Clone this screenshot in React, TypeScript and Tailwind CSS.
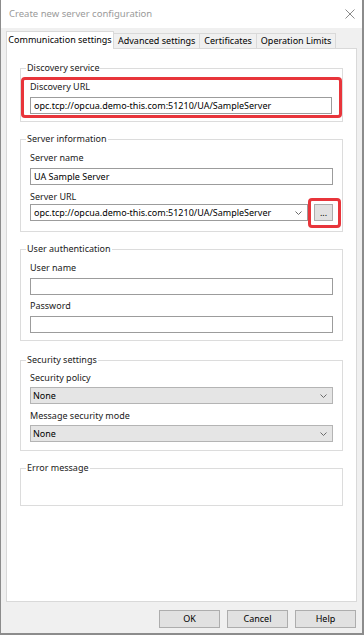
import { ReactNode } from "react";

const font = "font-['Noto_Sans','DejaVu_Sans',sans-serif]";

function Chevron({ className }: { className?: string }) {
  return (
    <svg width="7" height="4" viewBox="0 0 7 4" className={className}>
      <path d="M0.5 0.5 L3.5 3.5 L6.5 0.5" fill="none" stroke="#6b6b6b" strokeWidth="1" />
    </svg>
  );
}

interface GroupBoxProps {
  title: string;
  className?: string;
  children?: ReactNode;
}

function GroupBox({ title, className = "", children }: GroupBoxProps) {
  return (
    <fieldset className={`mx-[13px] border border-[#dcdcdc] ${className}`}>
      <legend className="ml-[5px] px-[1px] text-[9px] leading-[16px] text-[#1a1a1a]">
        {title}
      </legend>
      {children}
    </fieldset>
  );
}

function Label({ text, className = "" }: { text: string; className?: string }) {
  return (
    <div className={`h-[14px] text-[9px] leading-[14px] text-[#1a1a1a] ${className}`}>
      {text}
    </div>
  );
}

function TextBox({ value = "", className = "" }: { value?: string; className?: string }) {
  return (
    <div
      className={`flex h-[17px] items-center border border-[#9c9c9c] bg-white pl-[3px] text-[9px] text-black ${className}`}
    >
      {value}
    </div>
  );
}

function Select({ value, className = "" }: { value: string; className?: string }) {
  return (
    <div
      className={`flex h-[17px] items-center justify-between border border-[#b4b4b4] bg-[#e5e5e5] pl-[2px] pr-[5px] text-[9px] text-black ${className}`}
    >
      <span>{value}</span>
      <Chevron />
    </div>
  );
}

function DialogButton({ title }: { title: string }) {
  return (
    <button className="h-[18px] w-[61px] border border-[#adadad] bg-[#e1e1e1] text-[9px] text-black">
      {title}
    </button>
  );
}

const tabs = ["Advanced settings", "Certificates", "Operation Limits"];

export default function App() {
  return (
    <div
      className={`flex h-[635px] w-[364px] flex-col border-b-2 border-l border-r-2 border-[#8c8c8c] bg-[#f0f0f0] ${font}`}
    >
      {/* title bar */}
      <div className="flex h-[28px] shrink-0 items-center justify-between bg-white pl-[8px] pr-[7px]">
        <span className="text-[9.5px] text-[#9a9a9a]">Create new server configuration</span>
        <svg width="10" height="10" viewBox="0 0 10 10">
          <path d="M0.5 0.5 L9.5 9.5 M9.5 0.5 L0.5 9.5" stroke="#8a8a8a" strokeWidth="1" />
        </svg>
      </div>

      <div className="flex flex-1 flex-col px-[5px] pt-[3px]">
        {/* tabs */}
        <div className="flex h-[17px] items-end">
          <div className="relative z-10 -mb-[1px] flex h-[18px] w-[108px] items-center justify-center border border-b-0 border-[#d9d9d9] bg-white pb-[1px] text-[9px] text-black">
            Communication settings
          </div>
          {tabs.map((t) => (
            <div
              key={t}
              className="-ml-[1px] flex h-[15px] items-center border border-b-0 border-[#d9d9d9] bg-[#f0f0f0] px-[4px] text-[9px] text-black first:ml-0"
            >
              {t}
            </div>
          ))}
        </div>

        {/* tab page */}
        <div className="flex h-[554px] flex-col border border-[#d9d9d9] bg-white">
          <GroupBox title="Discovery service" className="mt-[11px] pb-[3px]">
            <div className="mt-[1px] rounded-[4px] border-[3px] border-[#e8353b] pb-[1px] pl-[6px] pr-[7px]">
              <Label text="Discovery URL" />
              <TextBox className="mt-[3px]" value="opc.tcp://opcua.demo-this.com:51210/UA/SampleServer" />
            </div>
          </GroupBox>

          <GroupBox title="Server information" className="mt-[9px]">
            <div className="px-[9px] pb-[10px] pt-[4px]">
              <Label text="Server name" />
              <TextBox className="mt-[3px]" value="UA Sample Server" />
              <Label text="Server URL" className="mt-[5px]" />
              <div className="flex items-center gap-[6px]">
                <div className="flex h-[17px] flex-1 items-center justify-between border border-[#9c9c9c] bg-white pl-[3px] pr-[5px] text-[9px] text-black">
                  <span>opc.tcp://opcua.demo-this.com:51210/UA/SampleServer</span>
                  <Chevron />
                </div>
                <button className="relative h-[17px] w-[19px] border border-[#adadad] bg-[#e1e1e1] text-[9px] leading-[10px] text-black">
                  ...
                  <span className="absolute -bottom-[8px] -left-[7px] -right-[9px] -top-[7px] rounded-[4px] border-[3px] border-[#e8353b]" />
                </button>
              </div>
            </div>
          </GroupBox>

          <GroupBox title="User authentication" className="mt-[9px]">
            <div className="px-[9px] pb-[7px] pt-[4px]">
              <Label text="User name" />
              <TextBox className="mt-[3px]" />
              <Label text="Password" className="mt-[4px]" />
              <TextBox className="mt-[3px]" />
            </div>
          </GroupBox>

          <GroupBox title="Security settings" className="mt-[11px]">
            <div className="px-[9px] pb-[8px] pt-[3px]">
              <Label text="Security policy" />
              <Select className="mt-[2px]" value="None" />
              <Label text="Message security mode" className="mt-[5px]" />
              <Select className="mt-[2px]" value="None" />
            </div>
          </GroupBox>

          <GroupBox title="Error message" className="mt-[9px]">
            <div className="h-[29px]" />
          </GroupBox>
        </div>

        {/* dialog buttons */}
        <div className="mt-[8px] flex justify-end gap-[7px] pr-[1px]">
          <DialogButton title="OK" />
          <DialogButton title="Cancel" />
          <DialogButton title="Help" />
        </div>
      </div>
    </div>
  );
}
